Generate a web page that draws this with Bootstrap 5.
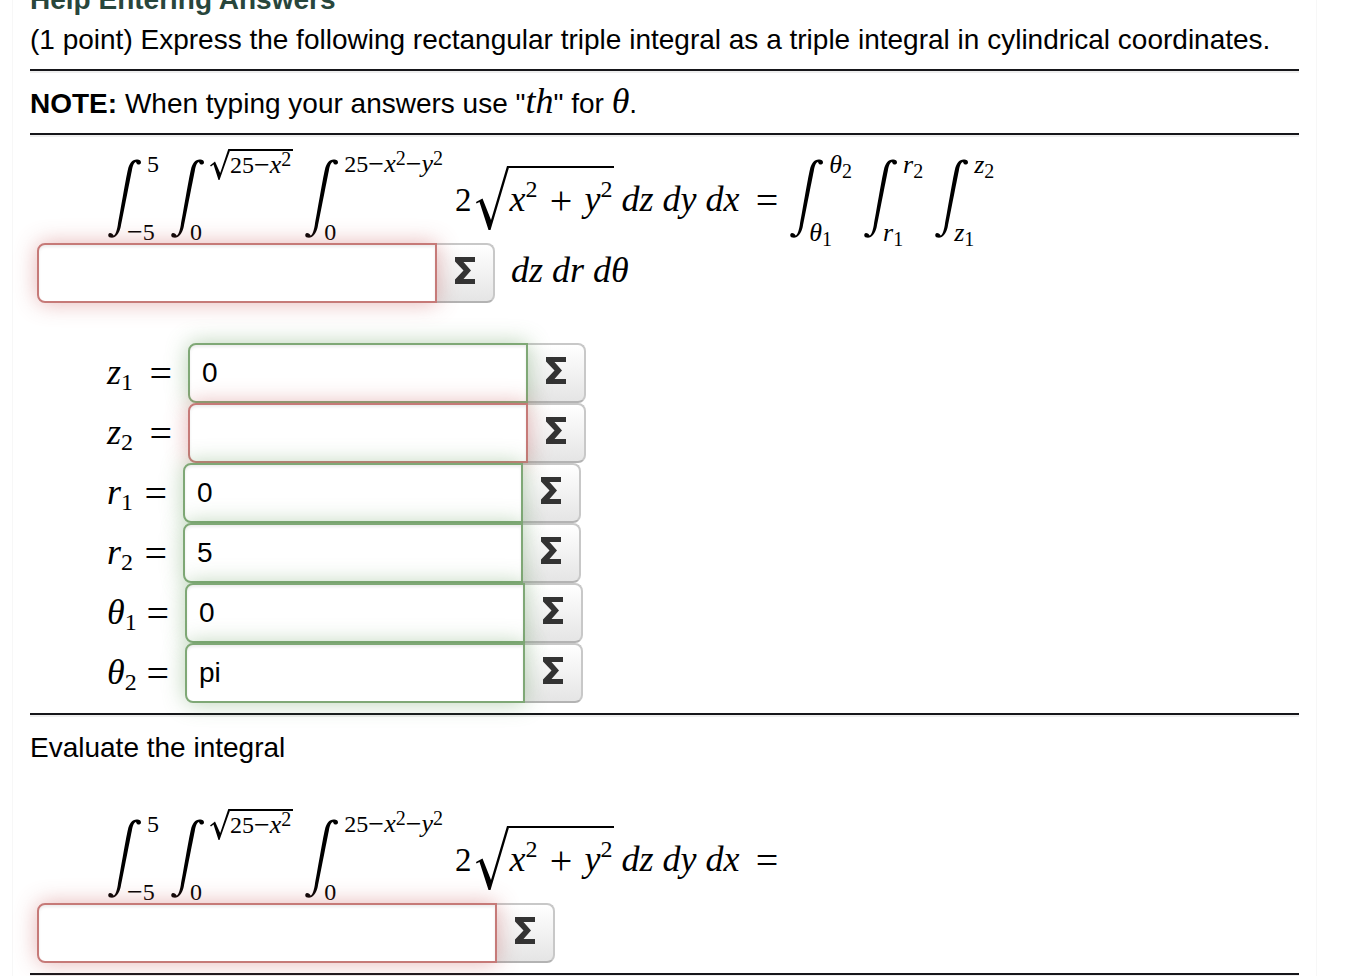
<!DOCTYPE html>
<html lang="en">
<head>
<meta charset="utf-8">
<meta name="viewport" content="width=device-width, initial-scale=1">
<title>Triple integral in cylindrical coordinates</title>
<link href="https://cdn.jsdelivr.net/npm/bootstrap@5.3.0/dist/css/bootstrap.min.css" rel="stylesheet">
<style>
  body { font: 28px/40px "Liberation Sans", Arial, sans-serif; color: #000; background: #fff; }
  .problem { margin: 0 41px 0 12px; padding: 0 17px; border: solid #f7f7f7; border-width: 0 1px; }
  .help-title { height: 40px; margin-top: -20px; font-weight: 700; }
  .help-title a { color: #28463c; }
  .rule { height: 4px; border: 0; margin: 0; opacity: 1; background: linear-gradient(#16161a 50%, #eee 50%); }
  .point { height: 49px; }
  .note { height: 60px; padding-top: 11px; white-space: nowrap; }
  .math { font-family: "Liberation Serif", "Times New Roman", serif; font-size: 33px; white-space: nowrap; }
  .math i, i.math { font-size: 36px; line-height: 0; }
  .math sup, .math sub { font-size: 24px; line-height: 0; vertical-align: baseline; }
  .math sup { top: -14px; }
  .math sub { top: 6px; }
  .op { font-size: 40px; line-height: 0; vertical-align: -3px; }
  .plus { padding: 0 4px; }
  .equals { padding-left: 8px; }
  .formula { height: 106px; padding: 22px 0 0 78px; gap: 12px; }
  .integral { height: 80px; }
  .limits { margin: -7px 0 0 -15px; font-size: 24px; line-height: 24px; }
  .limits i { font-size: 26px; }
  .limits .op { font-size: 28px; vertical-align: -1px; }
  .limits sup, .limits sub { font-size: 20px; }
  .limits sup { top: -7px; }
  .limits sub { top: 5px; }
  .upper { display: flex; padding-left: 20px; height: 68px; }
  .indexed { padding-top: 1px; }
  .small-root { margin-top: -3px; }
  .small-root .under { border-top: 2px solid #000; padding: 2px 2px 0 0; height: 32px; }
  .integrand { padding-top: 7px; }
  .term { padding-top: 14px; }
  .big-root { height: 66px; }
  .big-root .under { border-top: 2px solid #000; padding: 12px 0 0 1px; width: 105px; }
  .entry { height: 60px; }
  .entry input {
    position: relative; width: 340px; height: 60px; padding: 0 12px; color: #000;
    font: 28px "Liberation Sans", Arial, sans-serif; background: #fff;
    border: 2px solid; border-radius: 8px 0 0 8px; outline: 0;
  }
  .entry .w-first { width: 400px; }
  .entry .w-last { width: 460px; }
  .entry .right { border-color: #7fa876; box-shadow: inset 0 2px 3px rgba(0,0,0,.08), 0 0 22px rgba(100,155,90,.45); }
  .entry .wrong { border-color: #c67a78; box-shadow: inset 0 2px 3px rgba(0,0,0,.08), 0 0 22px rgba(200,90,90,.45); }
  .entry button {
    width: 58px; height: 60px; padding: 0 0 8px; border: 2px solid #c8c8c8; border-bottom-color: #b3b3b3; border-left: 0;
    border-radius: 0 8px 8px 0; background: linear-gradient(#fff, #e5e5e5);
  }
  .var { padding-right: 16px; line-height: 60px; }
  .var-z { width: 81px; }
  .var-r { width: 76px; }
  .var-t { width: 78px; }
  .own-line { padding-left: 7px; }
  .answers { padding: 40px 0 10px 77px; }
  .after { padding: 8px 0 0 16px; }
  .evaluate { height: 80px; padding-top: 11px; }
  .closing { padding-top: 10px; }
</style>
</head>
<body>
<svg class="d-none" aria-hidden="true">
  <symbol id="int" viewBox="0 0 34 80">
    <path d="M33 3.500C33 1.200 31 .4 28.700 .6C24 1 21.500 4 19.800 11C18 18.500 11.500 57 9.800 66C8.700 72 7.500 76 5.500 76.500C5 75 3.600 74 2 74C-.4 74.600-.4 78 2.300 78.500C7.500 79.400 10.800 75.500 12.700 68C14.600 59 21.500 23 23.800 12C24.800 6.500 26 3.300 28 3C28.600 5 29.800 5.700 31.100 5.500C32.300 5.300 33 4.500 33 3.500Z"/>
  </symbol>
  <symbol id="root-s" viewBox="0 0 20 32"><path d="M0 16.500L5 12.500L10.200 24L18.300 0H20V1.500L9.500 31H8.500L3.500 15.500L1 17.500Z"/></symbol>
  <symbol id="root-b" viewBox="0 0 33 66"><path d="M0 36L6.500 32.500L15 54L31 0H33V1.500L14.500 64H12.500L3.500 36L.5 37.500Z"/></symbol>
  <symbol id="sigma" viewBox="0 0 20 27"><path fill="#333" d="M0 0H20V5H8.500L16 13.500L8.500 22H20V27H0V22.500L8.500 13.500L0 4.500Z"/></symbol>
</svg>

<main class="problem">
  <div class="help-title"><a class="text-decoration-none" href="#">Help Entering Answers</a></div>
  <div class="point">(1 point) Express the following rectangular triple integral as a triple integral in cylindrical coordinates.</div>
  <hr class="rule">
  <div class="note"><b>NOTE:</b> When typing your answers use "<i class="math">th</i>" for <i class="math">θ</i>.</div>
  <hr class="rule">

  <div class="formula math d-flex">
    <div class="integral d-flex"><svg width="34" height="80"><use href="#int"/></svg><div class="limits"><div class="upper">5</div><div><span class="op">−</span>5</div></div></div>
    <div class="integral d-flex"><svg width="34" height="80"><use href="#int"/></svg><div class="limits"><div class="upper"><div class="small-root d-flex"><svg width="20" height="32"><use href="#root-s"/></svg><span class="under">25<span class="op">−</span><i>x</i><sup>2</sup></span></div></div><div>0</div></div></div>
    <div class="integral d-flex"><svg width="34" height="80"><use href="#int"/></svg><div class="limits"><div class="upper"><span>25<span class="op">−</span><i>x</i><sup>2</sup><span class="op">−</span><i>y</i><sup>2</sup></span></div><div>0</div></div></div>
    <div class="integrand d-flex"><span class="term">2</span><span class="big-root d-flex ms-1"><svg width="33" height="66"><use href="#root-b"/></svg><span class="under"><i>x</i><sup>2</sup> <span class="op plus">+</span> <i>y</i><sup>2</sup></span></span><span class="term ps-2"><i>dz dy dx</i> <span class="op equals">=</span></span></div>
    <div class="integral d-flex"><svg width="34" height="80"><use href="#int"/></svg><div class="limits indexed"><div class="upper"><span><i>θ</i><sub>2</sub></span></div><div><i>θ</i><sub>1</sub></div></div></div>
    <div class="integral d-flex"><svg width="34" height="80"><use href="#int"/></svg><div class="limits indexed"><div class="upper"><span><i>r</i><sub>2</sub></span></div><div><i>r</i><sub>1</sub></div></div></div>
    <div class="integral d-flex"><svg width="34" height="80"><use href="#int"/></svg><div class="limits indexed"><div class="upper"><span><i>z</i><sub>2</sub></span></div><div><i>z</i><sub>1</sub></div></div></div>
  </div>
  <div class="entry own-line d-flex">
    <input class="w-first wrong" type="text" aria-label="Integrand"><button type="button" aria-label="Equation editor"><svg width="20" height="27"><use href="#sigma"/></svg></button>
    <div class="math after"><i>dz dr dθ</i></div>
  </div>

  <div class="answers">
    <div class="entry d-flex"><label for="z1" class="var var-z math d-flex justify-content-between"><span><i>z</i><sub>1</sub></span><span><span class="op">=</span></span></label><input id="z1" class="right" type="text" value="0"><button type="button" aria-label="Equation editor"><svg width="20" height="27"><use href="#sigma"/></svg></button></div>
    <div class="entry d-flex"><label for="z2" class="var var-z math d-flex justify-content-between"><span><i>z</i><sub>2</sub></span><span><span class="op">=</span></span></label><input id="z2" class="wrong" type="text"><button type="button" aria-label="Equation editor"><svg width="20" height="27"><use href="#sigma"/></svg></button></div>
    <div class="entry d-flex"><label for="r1" class="var var-r math d-flex justify-content-between"><span><i>r</i><sub>1</sub></span><span><span class="op">=</span></span></label><input id="r1" class="right" type="text" value="0"><button type="button" aria-label="Equation editor"><svg width="20" height="27"><use href="#sigma"/></svg></button></div>
    <div class="entry d-flex"><label for="r2" class="var var-r math d-flex justify-content-between"><span><i>r</i><sub>2</sub></span><span><span class="op">=</span></span></label><input id="r2" class="right" type="text" value="5"><button type="button" aria-label="Equation editor"><svg width="20" height="27"><use href="#sigma"/></svg></button></div>
    <div class="entry d-flex"><label for="t1" class="var var-t math d-flex justify-content-between"><span><i>θ</i><sub>1</sub></span><span><span class="op">=</span></span></label><input id="t1" class="right" type="text" value="0"><button type="button" aria-label="Equation editor"><svg width="20" height="27"><use href="#sigma"/></svg></button></div>
    <div class="entry d-flex"><label for="t2" class="var var-t math d-flex justify-content-between"><span><i>θ</i><sub>2</sub></span><span><span class="op">=</span></span></label><input id="t2" class="right" type="text" value="pi"><button type="button" aria-label="Equation editor"><svg width="20" height="27"><use href="#sigma"/></svg></button></div>
  </div>
  <hr class="rule">

  <div class="evaluate">Evaluate the integral</div>
  <div class="formula math d-flex">
    <div class="integral d-flex"><svg width="34" height="80"><use href="#int"/></svg><div class="limits"><div class="upper">5</div><div><span class="op">−</span>5</div></div></div>
    <div class="integral d-flex"><svg width="34" height="80"><use href="#int"/></svg><div class="limits"><div class="upper"><div class="small-root d-flex"><svg width="20" height="32"><use href="#root-s"/></svg><span class="under">25<span class="op">−</span><i>x</i><sup>2</sup></span></div></div><div>0</div></div></div>
    <div class="integral d-flex"><svg width="34" height="80"><use href="#int"/></svg><div class="limits"><div class="upper"><span>25<span class="op">−</span><i>x</i><sup>2</sup><span class="op">−</span><i>y</i><sup>2</sup></span></div><div>0</div></div></div>
    <div class="integrand d-flex"><span class="term">2</span><span class="big-root d-flex ms-1"><svg width="33" height="66"><use href="#root-b"/></svg><span class="under"><i>x</i><sup>2</sup> <span class="op plus">+</span> <i>y</i><sup>2</sup></span></span><span class="term ps-2"><i>dz dy dx</i> <span class="op equals">=</span></span></div>
  </div>
  <div class="entry own-line d-flex">
    <input class="w-last wrong" type="text" aria-label="Value of the integral"><button type="button" aria-label="Equation editor"><svg width="20" height="27"><use href="#sigma"/></svg></button>
  </div>
  <div class="closing"><hr class="rule"></div>
</main>
<script src="https://cdn.jsdelivr.net/npm/bootstrap@5.3.0/dist/js/bootstrap.bundle.min.js"></script>
</body>
</html>
